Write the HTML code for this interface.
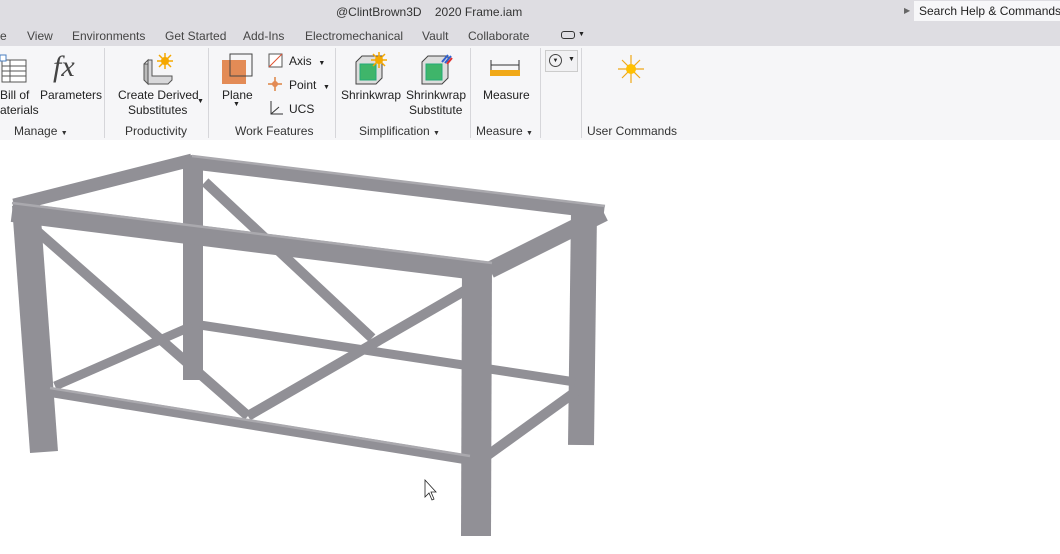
<!DOCTYPE html>
<html><head><meta charset="utf-8"><style>
*{margin:0;padding:0;box-sizing:border-box}
body{width:1060px;height:554px;overflow:hidden;background:#fff;font-family:"Liberation Sans",sans-serif;font-size:12px;color:#222;position:relative}
.title{position:absolute;left:0;top:0;width:1060px;height:22px;background:#dedde2}
.tabs{position:absolute;left:0;top:22px;width:1060px;height:24px;background:#dedde2}
.ribbon{position:absolute;left:0;top:46px;width:1060px;height:94px;background:#f6f6f8}
.t{position:absolute;white-space:nowrap}
.sep{position:absolute;top:48px;width:1px;height:90px;background:#d6d6da}
.gl{position:absolute;top:124px;color:#333}
</style></head><body>
<div class="title"></div>
<div class="t" style="left:336px;top:5px;color:#333">@ClintBrown3D&nbsp;&nbsp;&nbsp;&nbsp;2020 Frame.iam</div>
<div class="t" style="left:904px;top:6px;font-size:8px;color:#666">▶</div>
<div style="position:absolute;left:914px;top:1px;width:146px;height:20px;background:#f7f7f9"></div>
<div class="t" style="left:919px;top:4px;color:#222">Search Help &amp; Commands</div>
<div class="tabs"></div>
<div class="t" style="left:0;top:29px;color:#444">e</div>
<div class="t" style="left:27px;top:29px;color:#444">View</div>
<div class="t" style="left:72px;top:29px;color:#444">Environments</div>
<div class="t" style="left:165px;top:29px;color:#444">Get Started</div>
<div class="t" style="left:243px;top:29px;color:#444">Add-Ins</div>
<div class="t" style="left:305px;top:29px;color:#444">Electromechanical</div>
<div class="t" style="left:422px;top:29px;color:#444">Vault</div>
<div class="t" style="left:468px;top:29px;color:#444">Collaborate</div>
<div style="position:absolute;left:561px;top:31px;width:14px;height:8px;border:1px solid #333;border-radius:3px"></div>
<div class="t" style="left:578px;top:31px;font-size:7px">▼</div>
<div class="ribbon"></div>
<div class="sep" style="left:104px"></div><div class="sep" style="left:208px"></div><div class="sep" style="left:335px"></div><div class="sep" style="left:470px"></div><div class="sep" style="left:540px"></div><div class="sep" style="left:581px"></div>
<svg style="position:absolute;left:0;top:52px" width="30" height="32"><rect x="2" y="8" width="24" height="22" fill="#fff" stroke="#555"/><path d="M2 14H26M2 19H26M2 24H26M10 8V30" stroke="#555"/><rect x="0" y="3" width="6" height="6" fill="#fff" stroke="#4a7fc0"/></svg>
<div class="t" style="left:53px;top:50px;font-family:'Liberation Serif',serif;font-style:italic;font-size:30px;color:#444">fx</div>
<svg style="position:absolute;left:138px;top:52px" width="38" height="34"><path d="M6 12L10 8V32H30L34 28V24H14V8L10 8Z" fill="#d8d8da" stroke="#555"/><path d="M10 32V12H6V28Z" fill="#bbb" stroke="#555"/><circle cx="27" cy="9" r="4" fill="#f5a800"/><path d="M27 1V17M19 9H35M21 3L33 15M33 3L21 15" stroke="#f5a800" stroke-width="1.5"/></svg>
<svg style="position:absolute;left:220px;top:52px" width="36" height="34"><rect x="2" y="8" width="24" height="24" fill="#e38b56"/><rect x="10" y="2" width="22" height="22" fill="none" stroke="#444"/></svg>
<svg style="position:absolute;left:267px;top:52px" width="18" height="70"><rect x="2" y="2" width="13" height="13" fill="#fff" stroke="#555"/><path d="M2 15L15 2" stroke="#e05030"/><path d="M8 25V39M1 32H15" stroke="#e3a070" stroke-width="2"/><circle cx="8" cy="32" r="3" fill="#e38b56"/><path d="M4 49V62H16M4 62L12 55" stroke="#333" fill="none"/></svg>
<div class="t" style="left:289px;top:54px">Axis&nbsp;&nbsp;<span style="font-size:7px">▼</span></div>
<div class="t" style="left:289px;top:78px">Point&nbsp;&nbsp;<span style="font-size:7px">▼</span></div>
<div class="t" style="left:289px;top:102px">UCS</div>
<svg style="position:absolute;left:352px;top:52px" width="36" height="34"><path d="M4 10L10 4H30V26L24 32H4Z" fill="#ddd" stroke="#444"/><rect x="8" y="12" width="16" height="16" fill="#3fb56a" stroke="#2a7"/><circle cx="27" cy="8" r="4" fill="#f5a800"/><path d="M27 0V16M19 8H35M21 2L33 14M33 2L21 14" stroke="#f5a800" stroke-width="1.5"/></svg>
<svg style="position:absolute;left:418px;top:52px" width="36" height="34"><path d="M4 10L10 4H30V26L24 32H4Z" fill="#ddd" stroke="#444"/><rect x="8" y="12" width="16" height="16" fill="#3fb56a" stroke="#2a7"/><path d="M24 10L30 3M27 11L33 4" stroke="#3060d0" stroke-width="2"/><path d="M29 12L34 6" stroke="#e03030" stroke-width="2"/></svg>
<svg style="position:absolute;left:488px;top:56px" width="34" height="24"><path d="M3 4V14M31 4V14M3 9H31" stroke="#333"/><rect x="2" y="14" width="30" height="6" fill="#f0a818"/></svg>
<div style="position:absolute;left:545px;top:50px;width:33px;height:22px;border:1px solid #ccc;background:#f1f1f3"></div>
<div style="position:absolute;left:549px;top:54px;width:13px;height:13px;border:1px solid #444;border-radius:50%;font-size:6px;text-align:center;line-height:12px">▼</div>
<div class="t" style="left:568px;top:56px;font-size:7px">▼</div>
<svg style="position:absolute;left:617px;top:54px" width="28" height="30"><path d="M14 1V29M1 15H27M5 6L23 24M23 6L5 24" stroke="#f0a818" stroke-width="1.2"/><circle cx="14" cy="15" r="5" fill="#ffc000"/></svg>
<div class="t" style="left:0;top:88px">Bill of</div><div class="t" style="left:0;top:103px">aterials</div>
<div class="t" style="left:40px;top:88px">Parameters</div>
<div class="t" style="left:118px;top:88px">Create Derived</div><div class="t" style="left:128px;top:103px">Substitutes</div><div class="t" style="left:197px;top:98px;font-size:7px">▼</div>
<div class="t" style="left:222px;top:88px">Plane</div><div class="t" style="left:233px;top:101px;font-size:7px">▼</div>
<div class="t" style="left:341px;top:88px">Shrinkwrap</div>
<div class="t" style="left:406px;top:88px">Shrinkwrap</div><div class="t" style="left:409px;top:103px">Substitute</div>
<div class="t" style="left:483px;top:88px">Measure</div>
<div class="gl t" style="left:14px">Manage <span style="font-size:7px">▼</span></div>
<div class="gl t" style="left:125px">Productivity</div>
<div class="gl t" style="left:235px">Work Features</div>
<div class="gl t" style="left:359px">Simplification <span style="font-size:7px">▼</span></div>
<div class="gl t" style="left:476px">Measure <span style="font-size:7px">▼</span></div>
<div class="gl t" style="left:587px">User Commands</div>
<svg style="position:absolute;left:0;top:0" width="1060" height="554">
<g stroke="#919096" stroke-linecap="butt" fill="none">
<line x1="193" y1="162" x2="193" y2="380" stroke-width="20"/>
<line x1="584" y1="212" x2="581" y2="445" stroke-width="26"/>
<line x1="205" y1="182" x2="372" y2="338" stroke-width="10"/>
<line x1="200" y1="325" x2="575" y2="382" stroke-width="9"/>
<line x1="55" y1="386" x2="192" y2="326" stroke-width="9"/>
<line x1="14" y1="205" x2="192" y2="160" stroke-width="13"/>
<line x1="190" y1="162" x2="604" y2="212" stroke-width="14"/>
<line x1="490" y1="270" x2="604" y2="213" stroke-width="17"/>
<line x1="38" y1="232" x2="248" y2="416" stroke-width="10"/>
<line x1="248" y1="416" x2="466" y2="290" stroke-width="10"/>
<line x1="50" y1="392" x2="470" y2="460" stroke-width="10"/>
<line x1="488" y1="455" x2="578" y2="390" stroke-width="10"/>
<line x1="12" y1="212" x2="492" y2="272" stroke-width="20"/>
<line x1="26" y1="205" x2="44" y2="452" stroke-width="28"/>
<line x1="477" y1="262" x2="476" y2="536" stroke-width="30"/>
</g>
<g stroke="#aaa9ae" stroke-width="2.5" fill="none">
<line x1="12" y1="203" x2="492" y2="263"/>
<line x1="192" y1="156" x2="605" y2="206"/>
<line x1="50" y1="388" x2="470" y2="456"/>
</g>
<path d="M425 480V497L429 493L432 500L434 499L431 492L436 492Z" fill="#fff" stroke="#222" stroke-width="0.8"/>
</svg>
</body></html>
